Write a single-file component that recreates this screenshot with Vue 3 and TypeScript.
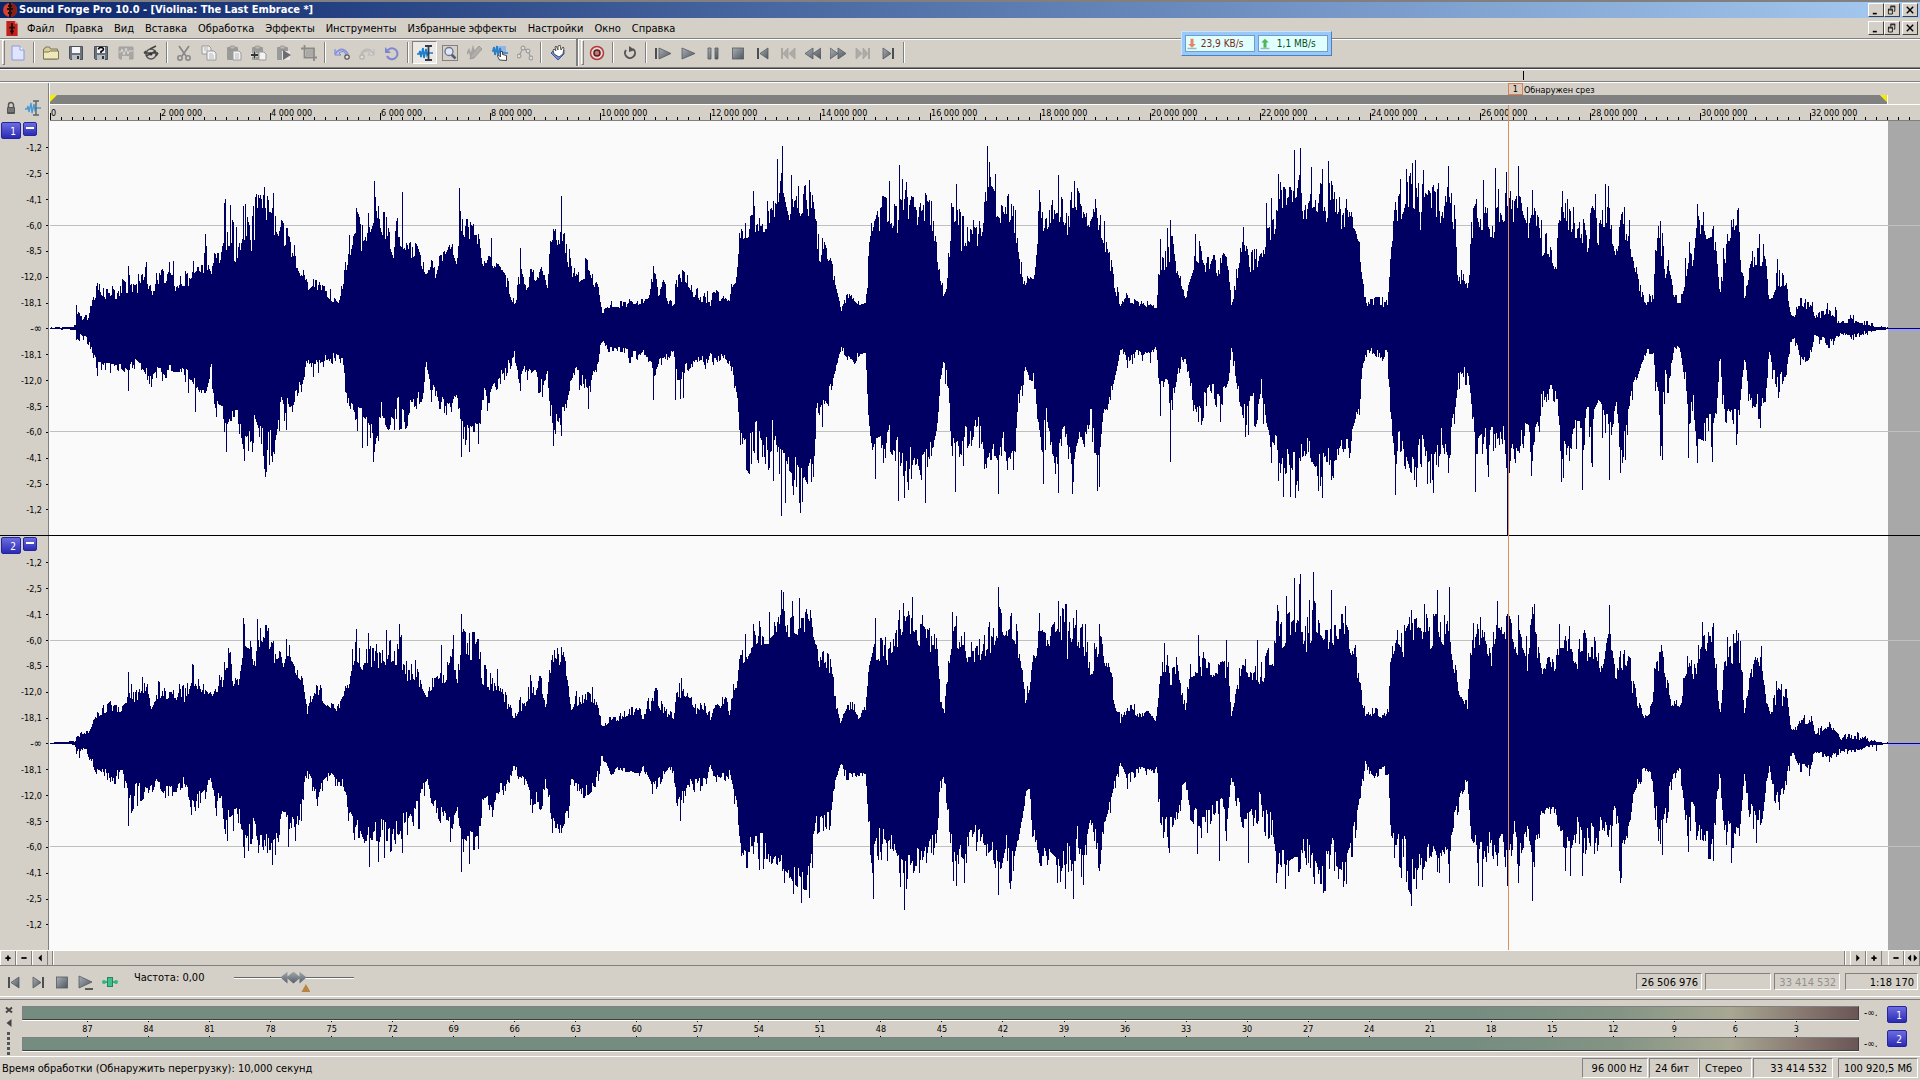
<script setup lang="ts">
import { ref } from 'vue'

interface ToolItem { kind: 'button' | 'sep' | 'edge'; label?: string; icon?: string; active?: boolean; off?: boolean }

const menu = ['Файл', 'Правка', 'Вид', 'Вставка', 'Обработка', 'Эффекты', 'Инструменты', 'Избранные эффекты', 'Настройки', 'Окно', 'Справка']

/* Glyphs live on a 16 x 16 grid; #steel is the shared grey gradient. */
const floppy = '<path d="M1.500 1.500h13v13h-12l-1-1z" fill="#6c737d" stroke="#4a5058"/><rect x="4" y="2" width="8" height="6" fill="#f4f6f8"/><rect x="4" y="10" width="8" height="5" fill="#b9bec5"/><rect x="9" y="11" width="2" height="3" fill="#30353c"/>'
const clip = '<rect x="1" y="2" width="11" height="13" rx="1" fill="#9a9a98"/><rect x="4" y="1" width="5" height="3" rx="1" fill="#b9b9b9" stroke="#868686" stroke-width=".6"/>'
const wave = '<path d="M0 9h2l1-3 1 6 2-9 1 10 2-9 1 6 1-2h5" fill="none" stroke="#1a7fd0" stroke-width="1.700"/>'
const icons: Record<string, string> = {
  create: '<path d="M2 1h8l4 4v10H2z" fill="#dfe4ff" stroke="#8e98d8"/><path d="M10 1v4h4" fill="#fff" stroke="#8e98d8"/>',
  open: '<path d="M0.500 14V4h1l1-2h4l1 2h7v10z" fill="#d8d09a" stroke="#7d7650"/><path d="M0.500 14V7h5l2-1h8v8z" fill="#eee8bc" stroke="#7d7650"/>',
  save: floppy,
  saveAs: floppy + '<path d="M5.500 4.500q0-2 2.500-2t2.500 1.700q0 1.300-2.500 2.300v1.500" fill="none" stroke="#000" stroke-width="1.600"/>',
  render: '<g opacity=".45"><path d="M1 2h14v12H2l-1-1z" fill="#777" stroke="#666"/><path d="M1 7h2l1-3 2 6 2-7 2 6 1-3h4" fill="none" stroke="#ddd"/><rect x="4" y="11" width="7" height="4" fill="#ccc"/></g>',
  publish: '<circle cx="8" cy="9" r="5" fill="none" stroke="#555" stroke-width="1.500"/><path d="M1 8h14M3 11l10-5" fill="none" stroke="#444" stroke-width="1.500"/><circle cx="8" cy="9" r="1.500" fill="#333"/><path d="M7 4l6-3M1 8l2-2M15 8l-2 3" stroke="#444" stroke-width="1.500"/>',
  cut: '<path d="M3 1l7 10M13 1L6 11" stroke="#858585" stroke-width="1.600"/><circle cx="4" cy="13" r="2.200" fill="none" stroke="#858585" stroke-width="1.500"/><circle cx="12" cy="13" r="2.200" fill="none" stroke="#858585" stroke-width="1.500"/>',
  copy: '<path d="M1 1h7l2 2v6H1z" fill="#eee" stroke="#999"/><path d="M6 6h7l2 2v7H6z" fill="#f4f4f4" stroke="#999"/><path d="M8 9h4M8 11h5M8 13h5M3 3h4M3 5h4" stroke="#aaa" stroke-width=".8"/>',
  paste: clip + '<path d="M7 6h6l2 2v7H7z" fill="#f2f2f2" stroke="#999"/><path d="M9 9h4M9 11h4M9 13h4" stroke="#aaa" stroke-width=".8"/>',
  pasteNew: clip + '<path d="M8 7h5l2 2v6H8z" fill="#f2f2f2" stroke="#999"/><path d="M0 10h7M3.500 6.500v7" stroke="#fff" stroke-width="3"/><path d="M0 10h7M3.500 6.500v7" stroke="#333" stroke-width="1.800"/>',
  pastePlay: clip + '<path d="M6 6h8v9H6z" fill="#e6e6e6"/><path d="M7 5l8 5-8 5z" fill="#6d6d6d"/>',
  trim: '<path d="M3.500 0v12.500H16M0 3.500h13V16" fill="none" stroke="#8d8a86" stroke-width="1.800"/><rect x="5" y="5" width="7" height="6" fill="#aaa"/>',
  undo: '<path d="M1 4v6h6l-2-2q5-4 7 2" fill="#c5c9ef" stroke="#7b83cf"/><path d="M1 9q7-9 13 0" fill="none" stroke="#8a91d8" stroke-width="1.800"/><circle cx="13" cy="12" r="2.200" fill="#e7e7e7" stroke="#555" stroke-width="1.200"/>',
  redo: '<g opacity=".6"><path d="M15 4v6H9l2-2q-5-4-7 2" fill="#ddd" stroke="#aaa"/><path d="M15 9Q8 0 2 9" fill="none" stroke="#aaa" stroke-width="1.800"/><circle cx="3" cy="12" r="2.200" fill="#e7e7e7" stroke="#999" stroke-width="1.200"/></g>',
  repeat: '<path d="M4 5a5.500 5.500 0 1 1-1 6" fill="none" stroke="#7e86d2" stroke-width="2" /><path d="M1 2v6h6z" fill="#7e86d2"/>',
  edit: wave + '<path d="M8 1h7M8 15h7M11.500 1v14" stroke="#333b46" stroke-width="1.800"/>',
  magnify: '<rect x=".5" y=".5" width="15" height="15" fill="none" stroke="#333" stroke-dasharray="1 1"/><path d="M9 9l4.500 4.500" stroke="#545b75" stroke-width="2.500"/><circle cx="7" cy="6.500" r="4" fill="#dfe8f8" stroke="#6c7390" stroke-width="1.300"/>',
  pencil: '<g opacity=".6"><path d="M0 9l2-4 2 6 2-8 2 7" fill="none" stroke="#888" stroke-width="1.800"/><path d="M3 14l1-4 8-9 3 3-8 9z" fill="#999" stroke="#777"/></g>',
  event: '<rect x="5" y="1" width="9" height="7" fill="#8fb7ea"/><path d="M0 6h1l1-4 1 8 2-9 1 10 2-8 1 5h7" fill="none" stroke="#2b7fc6" stroke-width="1.700"/><path d="M7.500 15l-2-4 1-1 2 2V6.500h2v3l4 1v5z" fill="#fff" stroke="#333" stroke-width=".9"/>',
  envelope: '<g fill="#ddd" stroke="#909090"><path d="M2 11l4-8 5 3 3 7" fill="none"/><circle cx="2" cy="11" r="2"/><circle cx="6" cy="3" r="2"/><circle cx="11" cy="6" r="2"/><circle cx="14" cy="13" r="2"/></g>',
  script: '<path d="M1 8l7 7 6-6V5L8 11 3 6z" fill="#6f8ddc" stroke="#4058a8"/><path d="M4 9L3 5l1-1 2 2-1-4 1-1 2 4V1l2-1 1 5 2-3 1 1-1 6-4 3z" fill="#fff" stroke="#444" stroke-width=".9"/>',
  record: '<circle cx="8" cy="8" r="6.500" fill="#ead7d3" stroke="#b5383b" stroke-width="1.500"/><circle cx="8" cy="8" r="3" fill="#b77b7b" stroke="#5c1c1e" stroke-width="1.500"/>',
  loop: '<path d="M4 5a5 5 0 1 0 7-1" fill="none" stroke="#555" stroke-width="2"/><path d="M7 1v6l6-2z" fill="#555"/>',
  playAll: '<path d="M1 3v11" stroke="#4b4f55" stroke-width="2"/><path d="M4 3l12 5.500L4 14z" fill="url(#steel)" stroke="#555a60" stroke-width=".8"/>',
  play: '<path d="M2 3l13 5.500L2 14z" fill="url(#steel)" stroke="#555a60" stroke-width=".8"/>',
  pause: '<path d="M3 3h3v11H3zM10 3h3v11h-3z" fill="url(#steel)" stroke="#555a60" stroke-width=".8"/>',
  stop: '<rect x="2.500" y="3" width="11" height="11" fill="url(#steel)" stroke="#555a60" stroke-width=".8"/>',
  toStart: '<path d="M3 3v11" stroke="#4b4f55" stroke-width="2"/><path d="M13 3v11L5 8.500z" fill="url(#steel)" stroke="#555a60" stroke-width=".8"/>',
  toEnd: '<path d="M13 3v11" stroke="#4b4f55" stroke-width="2"/><path d="M3 3v11l8-5.500z" fill="url(#steel)" stroke="#555a60" stroke-width=".8"/>',
  prev: '<g opacity=".5"><path d="M2 3v11" stroke="#666" stroke-width="1.500"/><path d="M8 3v11L3 8.500zM15 3v11L9 8.500z" fill="#888" stroke="#777" stroke-width=".8"/></g>',
  next: '<g opacity=".5"><path d="M14 3v11" stroke="#666" stroke-width="1.500"/><path d="M8 3v11l5-5.500zM1 3v11l6-5.500z" fill="#888" stroke="#777" stroke-width=".8"/></g>',
  rewind: '<path d="M8 3v11L0 8.500zM16 3v11L8 8.500z" fill="url(#steel)" stroke="#555a60" stroke-width=".8"/>',
  forward: '<path d="M0 3v11l8-5.500zM8 3v11l8-5.500z" fill="url(#steel)" stroke="#555a60" stroke-width=".8"/>',
  playLine: '<path d="M1 2l13 6L1 14z" fill="url(#steel)" stroke="#555a60" stroke-width=".8"/><path d="M7 15h8" stroke="#333" stroke-width="1.500"/>',
  scrub: '<path d="M1 8h14" stroke="#2c9d70" stroke-width="1.500"/><circle cx="2" cy="8" r="2" fill="#35b384"/><circle cx="14" cy="8" r="2" fill="#35b384"/><rect x="5.500" y="3.500" width="5" height="9" fill="#3fbf8d" stroke="#23865e"/>',
  lock: '<rect x="4" y="7" width="8" height="7" rx="1" fill="#555"/><path d="M5.500 7V5a2.500 2.500 0 0 1 5 0v2" fill="none" stroke="#555" stroke-width="1.500"/><path d="M5 9h6M5 11h6" stroke="#999"/>',
  range: '<path d="M0 9h2l1-3 1 6 2-9 1 10 2-9 1 6 1-2h5" fill="none" stroke="#4a9bd4" stroke-width="1.400"/><path d="M8 1h6M8 15h6M11 1v14" stroke="#5a616a" stroke-width="1.400"/>',
  plus: '<path d="M8 5v6M5 8h6" stroke="#000" stroke-width="2"/>',
  minus: '<path d="M5 8h6" stroke="#000" stroke-width="2"/>',
  left: '<path d="M10 4v8L6 8z"/>',
  right: '<path d="M6 4v8l4-4z"/>',
  both: '<path d="M7 4v8L3 8zM10 4v8l4-4z"/>',
  min: '<path d="M4 12h5" stroke="#000" stroke-width="2"/>',
  restore: '<path d="M6 3.500h6M6 2.500h6M11.500 3v6H10M6.500 3v3M3 6.500h6M3 7.500h6M8.500 7v5.500h-5V7" fill="none" stroke="#000"/>',
  close: '<path d="M4 3.500l8 8M12 3.500l-8 8" stroke="#000" stroke-width="1.800"/>',
  down: '<path d="M6 1h4v7h3l-5 5-5-5h3z" fill="#e8825f"/><path d="M2 14h12" stroke="#9fb7c0" stroke-width="2"/>',
  up: '<path d="M6 13h4V6h3L8 1 3 6h3z" fill="#4fb75a"/><path d="M2 14h12" stroke="#9fb7c0" stroke-width="2"/>'
}

const b = (icon: string, label: string, active = false): ToolItem => ({ kind: 'button', icon, label, active })
const sep: ToolItem = { kind: 'sep' }
const tools: ToolItem[] = [
  b('create', 'Создать'), sep, b('open', 'Открыть'), b('save', 'Сохранить'), b('saveAs', 'Сохранить как'), b('render', 'Рендер'), b('publish', 'Опубликовать'), sep,
  b('cut', 'Вырезать'), b('copy', 'Копировать'), b('paste', 'Вставить'), b('pasteNew', 'Вставить в новый'), b('pastePlay', 'Прослушать буфер'), b('trim', 'Обрезать'), sep,
  b('undo', 'Отменить'), b('redo', 'Вернуть'), b('repeat', 'Повторить'), sep,
  b('edit', 'Правка', true), b('magnify', 'Лупа'), b('pencil', 'Карандаш'), b('event', 'Событие'), b('envelope', 'Огибающая'), sep, b('script', 'Скрипт'),
  { kind: 'edge' }, b('record', 'Запись'), sep, b('loop', 'Цикл'), sep,
  b('playAll', 'Воспроизвести всё'), b('play', 'Воспроизвести'), b('pause', 'Пауза'), b('stop', 'Стоп'), b('toStart', 'В начало'), b('prev', 'Назад'),
  b('rewind', 'Перемотка назад'), b('forward', 'Перемотка вперёд'), b('next', 'Вперёд'), b('toEnd', 'В конец'), sep
]
const windowKeys = [['min', 'Свернуть'], ['restore', 'Восстановить'], ['close', 'Закрыть']]
const transport = [['toStart', 'В начало'], ['toEnd', 'В конец'], ['stop', 'Стоп'], ['playLine', 'Воспроизвести'], ['scrub', 'Прокрутка']]

const viewSamples = 34_000_000
const totalSamples = 33_414_532
const cursorSample = 26_506_976
const group = (n: number) => String(n).replace(/\B(?=(\d{3})+$)/g, ' ')
const percent = (n: number, of: number) => (n / of) * 100 + '%'
const rulerMarks = Array.from({ length: 17 }, (_, i) => group(i * 2_000_000))
const levels = ['-1,2', '-2,5', '-4,1', '-6,0', '-8,5', '-12,0', '-18,1']
const axis = [...levels, '-∞', ...[...levels].reverse()]
const meterMarks = Array.from({ length: 29 }, (_, i) => 87 - i * 3)
const rate = ref(49)

/*
 * Peak data. Each channel is split into three blocks of 640 columns.
 * A body entry is: position, upper min, upper max, lower min, lower max;
 * a spike entry is: position, level (negative below the axis).
 * Positions use a 1568-step grid per block and levels are thirds of a pixel.
 */
interface Block { body: string; spikes: string }
const channels: Block[][] = [
  [
    {
      body: '120 0 2 0 1;160 2 4 0 2;184 4 8 2 4;187 20 67 20 56;196 20 40 10 30;214 22 40 20 40;222 55 75 45 60;230 85 110 80 110;240 85 130 100 130;270 92 122 105 135;300 90 130 100 125;312 90 115 110 140;317 110 170 110 150;330 100 145 85 115;350 120 170 100 125;357 150 185 110 150;366 100 130 130 160;373 76 100 130 160;380 130 155 115 150;400 130 165 115 165;417 160 190 110 150;424 105 175 110 170;440 130 160 115 145;460 125 175 125 170;472 150 215 140 190;480 160 225 170 240;490 150 230 160 205;503 155 230 160 205;517 130 160 100 130;524 190 265 170 230;535 195 215 190 270;550 215 330 200 280;565 210 340 240 290;580 205 300 240 290;590 230 310 200 300;603 280 370 270 380;615 230 290 250 360;620 240 340 220 310;633 340 400 280 330;647 350 400 310 400;655 300 380 310 400;667 270 375 300 380;675 270 340 300 350;688 240 310 200 260;700 240 290 190 290;712 210 280 200 270;722 190 240 170 225;735 150 190 160 200;745 145 160 120 190;752 90 130 80 100;765 110 145 100 130;780 110 140 90 120;800 95 120 80 110;818 75 95 70 105;827 68 80 75 85;838 110 130 90 130;845 160 200 150 190;852 190 240 170 250;865 240 310 220 290;875 240 350 240 310;890 215 300 250 340;900 250 320 270 330;915 300 370 300 350;922 320 390 310 350;935 240 320 210 330;950 250 330 280 340;963 200 280 230 300;975 230 320 210 290;990 240 310 240 290;1005 200 275 210 260;1020 210 260 200 250;1033 180 210 170 220;1042 130 150 90 110;1055 150 200 150 200;1065 140 180 160 200;1075 190 220 200 250;1090 210 240 210 260;1105 240 310 220 260;1118 190 210 170 190;1127 300 350 260 330;1140 270 330 240 320;1150 240 330 240 300;1165 260 310 250 310;1173 250 320 230 310;1180 180 220 180 210;1200 180 215 175 210;1220 150 200 135 180;1240 125 160 100 140;1258 65 90 60 85;1264 75 100 80 110;1275 150 220 140 200;1285 110 140 110 150;1300 140 200 130 190;1310 120 150 120 160;1325 170 210 150 210;1340 100 130 110 130;1347 210 260 200 240;1360 240 300 230 290;1375 260 310 240 300;1388 200 270 210 240;1400 120 160 105 140;1415 140 180 120 170;1435 155 210 140 190;1445 140 200 160 200;1455 120 145 110 140;1465 100 120 90 120;1470 50 70 45 60;1476 42 50 32 45;1490 60 75 50 70;1520 60 80 55 70;1540 65 85 60 90;1556 55 75 65 90;1568 80 100 80 100',
      spikes: '564 370;503 283;633 400;645 400;917 442;986 409;1126 421;1375 397;1204 271;1275 241;1435 211;315 187;357 184;239 136;415 199;873 361;315 -187;478 -250;555 -368;599 -395;652 -428;648 -421;667 -398;915 -400;1131 -383;1150 -370;1356 -350;1375 -322;1442 -239;239 -140;1195 -245'
    },
    {
      body: '0 75 105 70 90;6 50 80 60 75;20 90 110 90 105;34 130 185 110 150;45 90 110 90 100;57 90 135 80 100;68 65 85 65 90;82 62 70 55 70;88 120 180 120 180;100 130 190 130 170;115 120 160 100 140;130 95 120 90 105;150 70 100 80 100;163 80 120 90 120;172 60 70 60 75;178 80 115 90 110;195 80 95 70 100;208 85 100 70 90;218 75 85 80 100;226 130 170 120 150;235 140 160 170 190;243 260 310 290 340;255 270 330 320 390;270 270 350 300 400;285 280 360 280 380;300 280 370 310 400;320 290 380 290 380;332 290 400 250 380;340 400 460 330 440;350 400 450 380 480;365 310 410 380 470;380 340 410 390 500;395 310 400 420 510;410 340 420 420 490;422 330 410 370 450;430 240 310 220 290;440 200 270 220 280;450 210 260 200 260;465 190 210 150 220;475 130 170 130 150;483 95 120 90 110;492 50 70 42 60;500 55 80 60 80;515 85 105 70 95;525 80 100 75 105;535 65 75 65 80;552 70 85 70 75;558 150 210 200 280;565 250 320 300 350;573 300 380 330 400;590 290 370 320 400;605 280 360 270 360;620 310 360 310 400;630 270 330 330 410;636 370 430 380 480;650 340 420 370 480;670 320 390 350 420;680 310 350 350 410;690 330 400 360 470;705 310 370 340 410;718 290 350 310 370;727 200 290 270 310;735 120 150 120 150;743 90 110 80 110;752 110 180 110 180;760 260 350 270 350;773 280 360 350 450;783 200 300 280 380;797 250 310 300 390;810 240 300 300 360;825 250 310 240 300;838 260 340 310 390;845 360 440 370 450;855 370 440 350 430;870 340 420 350 430;880 330 380 370 450;893 260 360 280 350;902 320 390 380 450;918 270 370 330 410;925 220 260 200 270;935 130 180 160 200;943 125 150 110 130;955 150 180 150 180;965 140 200 130 200;973 250 380 280 340;985 280 350 300 370;995 280 350 220 310;1010 320 390 340 400;1025 330 400 340 410;1040 280 350 270 340;1050 280 340 310 400;1060 340 430 380 480;1068 350 420 330 390;1080 310 380 290 330;1092 290 340 320 390;1103 230 330 200 240;1115 320 360 360 450;1125 290 340 380 460;1135 250 300 230 280;1148 180 260 200 240;1160 120 160 120 160;1172 65 90 60 100;1177 55 70 45 60;1185 75 95 70 90;1195 80 105 70 100;1215 65 85 60 85;1235 60 80 60 85;1250 70 90 70 100;1265 50 60 50 65;1270 130 190 140 190;1280 160 220 160 230;1290 140 210 150 220;1300 220 310 200 270;1312 150 200 140 170;1325 95 140 80 110;1337 80 90 85 100;1345 140 180 140 180;1360 190 260 190 250;1375 170 250 220 300;1385 160 200 170 230;1395 150 190 160 190;1405 190 230 170 200;1415 150 210 160 220;1425 190 230 180 240;1440 160 210 160 200;1448 70 90 60 90;1458 110 150 110 160;1466 180 220 180 230;1480 230 290 220 300;1495 150 230 190 290;1510 190 270 200 260;1520 140 190 140 200;1535 260 320 280 340;1550 260 330 290 370;1568 350 430 320 420',
      spikes: '337 508;349 547;370 460;277 412;415 445;611 440;636 490;653 437;763 375;775 433;852 547;857 499;871 463;1025 460;1064 442;1116 388;1292 300;1299 325;1362 283;34 187;1535 376;1547 391;1564 463;1275 268;34 -214;88 -214;99 -210;106 -207;347 -562;393 -553;327 -457;577 -449;634 -517;648 -508;699 -523;773 -490;879 -496;988 -466;1025 -493;1059 -496;1121 -487;1195 -118;1275 -260;1299 -400;1423 -280;1483 -325;1547 -403;1564 -457'
    },
    {
      body: '0 340 430 380 440;15 330 430 360 420;30 370 430 370 450;48 400 480 370 450;58 310 360 310 380;65 310 380 290 360;75 340 420 350 440;90 350 430 390 460;100 300 390 370 470;112 320 370 360 410;125 380 450 340 420;140 320 400 350 400;152 270 350 320 380;168 310 390 310 400;180 270 310 270 330;193 240 270 210 270;200 140 180 120 150;208 60 85 60 90;220 70 90 60 80;240 65 90 60 90;262 65 85 60 80;270 200 230 230 260;280 340 370 330 420;300 290 400 290 390;315 370 460 350 440;330 340 480 400 460;342 290 380 300 390;355 370 450 360 440;375 350 420 350 430;395 310 400 300 380;413 360 450 350 430;425 260 350 240 290;435 130 190 130 180;445 130 180 120 160;460 100 120 110 150;468 240 340 220 310;480 280 370 300 390;495 290 380 290 370;507 280 370 310 380;518 220 330 280 360;530 330 420 310 370;548 300 360 290 350;556 370 440 340 440;570 310 390 290 360;582 350 450 330 420;595 310 370 280 340;608 250 340 290 350;618 320 400 310 400;632 280 340 270 350;640 190 280 180 230;655 220 290 170 210;675 160 200 170 200;682 240 340 250 310;692 330 400 340 430;710 290 370 300 370;725 250 340 270 330;740 260 370 260 370;750 220 330 230 310;765 290 370 260 370;780 240 330 220 320;797 310 400 250 330;815 240 350 250 290;823 200 240 200 240;835 270 350 330 420;845 270 340 300 370;858 210 280 200 260;868 150 190 140 170;880 110 140 100 130;893 65 85 60 80;910 75 95 60 80;914 75 95 60 80;920 180 280 150 240;935 220 310 230 320;943 130 180 120 170;950 160 220 150 200;965 75 95 50 65;980 75 95 55 70;990 120 160 110 160;1002 220 320 240 330;1010 130 190 150 210;1022 260 340 260 360;1040 270 340 260 350;1058 280 350 260 360;1068 200 270 210 280;1077 75 90 70 85;1085 150 240 180 260;1095 240 280 230 280;1110 240 310 240 310;1122 260 330 240 300;1130 160 210 150 180;1138 70 90 65 80;1145 130 180 150 200;1160 190 260 200 260;1178 190 260 200 250;1187 200 250 180 240;1197 70 85 55 70;1206 90 120 110 140;1220 130 190 150 200;1240 110 140 100 140;1250 40 60 35 50;1258 30 45 25 35;1270 60 90 60 90;1285 60 90 80 110;1300 60 90 60 80;1308 25 40 15 30;1325 30 55 25 45;1345 40 60 30 50;1358 25 55 30 45;1370 10 20 10 20;1385 15 30 10 20;1405 15 35 15 30;1425 10 22 8 20;1445 5 15 5 12;1460 2 5 2 5;1488 1 2 1 2',
      spikes: '35 535;49 541;76 484;104 477;119 502;295 448;324 496;332 505;351 475;414 487;498 445;528 481;555 467;585 487;619 415;692 412;773 403;797 433;844 364;933 322;1023 373;1120 355;1174 283;1219 208;1341 76;8 -503;25 -503;38 -506;94 -487;104 -506;283 -497;334 -475;376 -491;413 -433;479 -488;511 -445;616 -440;690 -460;741 -482;807 -452;834 -433;933 -380;937 -392;1001 -388;1023 -403;1059 -398;1118 -347;1177 -298;1222 -208;557 -617'
    }
  ],
  [
    {
      body: '120 0 1 0 1;160 2 4 0 1;183 4 8 1 3;187 20 57 20 58;196 20 38 10 28;214 22 35 20 40;222 45 60 40 60;235 75 95 65 90;260 88 110 80 110;280 88 125 80 110;300 90 115 80 105;313 105 130 110 150;320 140 185 140 190;330 120 160 120 170;345 150 180 120 160;357 150 195 110 150;373 88 110 125 160;382 130 165 100 130;395 130 175 125 165;410 130 160 120 150;430 130 150 120 150;450 120 180 100 140;463 140 180 150 200;475 170 235 165 215;490 140 170 140 180;500 130 175 130 175;517 120 140 95 115;527 150 190 140 190;540 150 190 150 190;552 200 250 200 260;563 200 270 190 250;570 160 180 180 240;583 170 220 170 240;598 280 350 260 330;612 260 330 240 320;622 190 250 210 260;635 290 350 270 320;655 270 340 270 330;665 240 290 270 330;680 240 320 240 310;693 200 230 190 220;708 240 300 220 270;725 200 230 220 270;740 180 195 160 200;746 120 140 100 130;752 80 100 70 90;765 120 150 100 140;775 150 185 150 180;790 120 155 100 130;805 105 125 80 110;825 95 110 105 120;838 110 140 100 130;853 160 220 170 220;867 240 310 200 260;880 230 270 210 260;895 220 300 240 310;915 230 300 240 310;935 230 280 230 310;955 240 310 250 320;975 240 300 230 290;990 200 280 210 280;1005 180 270 180 240;1025 170 240 170 230;1035 140 170 120 160;1045 130 140 100 120;1055 150 190 150 180;1075 170 230 170 220;1090 190 250 190 230;1110 220 300 200 270;1120 180 220 180 230;1133 290 340 260 310;1150 240 310 260 310;1172 260 320 250 300;1180 180 220 160 220;1195 150 210 150 190;1210 160 210 150 200;1225 150 190 120 160;1240 110 140 110 130;1258 65 80 60 75;1275 100 140 90 120;1287 95 120 100 130;1300 140 190 150 190;1325 140 180 140 180;1338 90 120 100 130;1348 220 270 180 220;1360 250 275 220 260;1375 230 280 220 270;1390 170 200 180 230;1398 100 120 100 125;1415 110 150 110 150;1440 110 150 110 150;1452 100 140 100 140;1465 90 120 80 120;1473 45 55 30 45;1490 60 80 60 80;1520 70 85 70 90;1540 80 100 75 90;1568 90 115 85 100',
      spikes: '315 213;473 235;562 270;596 376;599 358;631 373;655 337;702 313;873 343;947 340;979 358;1081 295;1131 388;1376 289;1452 169;1299 205;315 -247;469 -214;530 -217;557 -290;599 -343;667 -364;707 -310;905 -370;927 -355;986 -328;1131 -385;1150 -361;1353 -268;1376 -268;1028 -256;1104 -295'
    },
    {
      body: '0 80 115 70 90;6 60 75 60 75;18 85 115 85 110;35 120 165 120 170;50 100 130 90 120;70 75 100 65 80;82 68 85 70 90;88 130 165 150 190;102 140 180 130 200;115 130 160 110 140;135 90 115 100 130;160 95 125 95 130;172 60 75 60 70;180 100 110 90 110;200 110 130 85 105;210 120 145 90 130;218 80 100 75 90;228 150 180 130 180;236 150 180 160 190;243 240 280 270 320;260 250 300 290 350;280 270 340 280 350;300 290 350 270 350;320 290 360 280 350;335 310 380 280 340;346 370 450 340 390;360 310 380 350 410;373 320 400 370 430;390 310 390 380 450;405 340 400 390 460;417 310 370 350 420;428 240 320 220 280;435 210 280 210 270;450 240 290 200 260;465 210 270 200 250;475 120 170 110 140;490 60 75 55 75;503 90 115 80 110;520 95 125 90 110;535 70 90 85 105;552 85 105 80 95;560 200 260 230 310;572 250 330 300 400;585 250 310 250 310;600 230 310 260 330;620 260 320 280 340;640 300 380 340 410;660 320 390 340 420;675 310 380 310 370;690 290 370 330 400;710 270 350 290 350;725 250 310 260 320;735 120 170 110 160;745 90 100 90 110;752 180 220 160 210;763 290 350 290 370;773 300 360 340 410;785 210 300 290 340;800 240 300 290 360;818 240 300 230 300;832 240 300 260 320;850 280 370 300 370;865 270 360 280 350;878 340 400 350 420;895 310 340 260 320;905 320 370 340 410;920 300 370 300 370;935 190 230 200 250;943 120 140 140 180;953 150 180 130 160;963 240 280 250 300;980 290 360 300 350;1000 290 340 310 360;1025 330 400 350 410;1047 260 370 250 340;1060 310 380 350 430;1072 270 350 230 320;1085 280 360 330 410;1103 200 290 210 250;1123 270 350 290 360;1135 250 290 230 290;1148 200 230 180 210;1160 120 160 120 150;1178 55 75 45 70;1190 85 110 80 110;1207 85 110 75 105;1225 75 85 70 90;1245 80 95 75 90;1265 65 80 60 75;1273 200 260 190 240;1285 200 270 210 270;1300 180 250 220 300;1315 200 260 190 250;1327 130 170 120 150;1337 95 105 110 130;1345 190 240 170 230;1365 200 260 200 260;1380 190 260 190 250;1395 190 240 190 240;1410 180 230 170 210;1425 200 250 170 260;1438 200 270 200 260;1448 75 90 80 100;1460 130 170 130 170;1475 190 250 200 270;1490 190 240 200 270;1505 190 220 190 260;1520 160 220 130 200;1535 220 290 210 290;1550 220 290 200 270;1560 300 370 290 360;1568 300 370 300 370',
      spikes: '101 196;258 328;277 358;317 394;346 460;351 454;373 427;391 436;408 403;577 376;645 421;668 439;658 397;692 385;766 394;775 382;879 469;911 391;980 391;1025 427;1069 400;1126 358;1285 301;1368 325;1437 310;1513 310;1562 415;99 -230;294 -377;354 -416;396 -478;572 -464;648 -499;795 -416;768 -412;879 -452;905 -416;1042 -434;1062 -464;1086 -422;1123 -371;1195 -136;1297 -328;1366 -331;1420 -352;1491 -358;1559 -416'
    },
    {
      body: '0 270 330 320 370;15 300 360 320 400;32 320 380 320 390;48 380 450 320 390;58 240 300 240 290;70 280 380 300 380;85 320 400 340 410;105 290 370 330 410;122 260 370 280 370;140 310 370 310 380;160 310 370 310 390;175 260 310 270 350;188 200 270 200 250;200 120 160 110 150;208 65 80 50 65;222 80 105 80 110;245 75 90 70 95;265 80 95 65 85;270 240 280 230 260;285 290 340 270 350;303 260 330 260 370;320 310 380 330 420;335 310 370 340 420;355 320 400 320 370;368 270 340 260 340;385 320 380 320 370;400 290 350 280 340;414 330 400 330 420;425 200 250 210 240;440 140 180 140 170;458 100 125 100 120;466 250 310 260 310;485 290 370 290 370;500 260 350 300 370;516 220 300 240 320;530 310 390 310 370;545 280 340 260 330;557 310 370 340 410;573 230 300 210 300;585 280 370 310 380;605 220 290 240 300;620 320 400 320 400;632 240 310 240 300;642 195 230 190 210;657 215 245 190 230;673 210 240 190 210;685 270 330 260 340;710 270 330 270 350;727 220 280 220 270;745 280 345 290 370;760 200 270 220 280;770 250 340 260 340;785 180 230 200 250;805 280 350 260 340;822 160 210 170 210;833 230 290 290 380;855 210 270 210 260;865 130 180 130 150;880 90 120 90 115;897 55 75 60 80;910 90 110 75 100;920 180 260 170 240;935 220 290 240 310;950 150 210 140 210;960 105 130 90 110;980 100 120 65 85;990 180 260 200 240;1002 220 300 220 310;1010 140 180 150 180;1022 230 290 230 290;1040 280 340 260 320;1060 270 330 260 320;1070 160 200 140 170;1077 75 90 80 100;1087 210 270 230 310;1105 230 310 210 290;1127 230 310 220 290;1138 75 100 75 90;1147 150 180 170 220;1165 190 260 200 270;1180 230 290 190 240;1190 110 150 100 130;1197 70 85 55 70;1208 100 150 110 150;1220 130 190 130 180;1240 100 160 100 140;1250 35 50 30 45;1258 25 40 25 35;1272 60 85 55 75;1297 60 90 60 85;1310 15 30 15 25;1335 35 60 30 50;1355 30 50 30 50;1375 10 25 10 20;1400 15 35 15 30;1425 10 20 10 18;1445 4 12 4 10;1462 2 4 2 5;1488 0 3 0 1',
      spikes: '16 442;36 496;49 508;82 514;126 460;160 412;321 400;353 418;386 460;415 469;533 427;585 385;623 418;685 358;807 415;934 295;1034 364;1062 361;1123 331;1179 292;1217 187;1241 162;13 -436;84 -421;112 -442;155 -430;322 -487;334 -436;415 -418;486 -427;496 -430;557 -427;585 -418;619 -472;699 -382;711 -397;741 -397;834 -418;937 -334;1001 -325;1062 -350;1106 -358;1168 -298;1224 -198;1462 -22'
    }
  ]
]

const parse = (text: string) => text.split(';').map(row => row.split(' ').map(Number))

function waveform(blocks: Block[], seed: number): string {
  let state = seed
  const random = () => {
    state = (state * 1664525 + 1013904223) % 4294967296
    return state / 4294967296
  }
  /* Mostly inside the min-max band, with an occasional peak past it. */
  const noise = () => (random() < 0.14 ? 1 + random() * 0.5 : random() * 1.1 - 0.1)
  const upper: number[] = []
  const lower: number[] = []
  let up = 0
  let down = 0
  blocks.forEach((block, index) => {
    const points = parse(block.body)
    const first = index * 640 - 50
    for (let column = 0; column < 640; column++) {
      const x = column * 2.45
      const at = points.findIndex(p => p[0] > x)
      if (at < 1) continue
      const from = points[at - 1]
      const to = points[at]
      const t = (x - from[0]) / (to[0] - from[0])
      const mix = (k: number) => from[k] + (to[k] - from[k]) * t
      if (random() > 0.25) up = noise()
      if (random() > 0.25) down = noise()
      upper[first + column] = mix(1) + (mix(2) - mix(1)) * up
      lower[first + column] = mix(3) + (mix(4) - mix(3)) * down
    }
    for (const [x, level] of parse(block.spikes)) {
      const column = first + Math.floor(x / 2.45)
      if (level > 0) upper[column] = level
      else lower[column] = -level
    }
  })
  let path = ''
  for (let column = 0; column < 1838; column++) {
    const top = 207 - Math.round(Math.max(0, upper[column] || 0) / 3)
    const bottom = 208 + Math.round(Math.max(0, lower[column] || 0) / 3)
    path += `M${column} ${top}h1V${bottom}h-1z`
  }
  return path
}

const tracks = channels.map((blocks, i) => ({ name: String(i + 1), path: waveform(blocks, 4177 + i * 911) }))
</script>

<template>
  <div class="app">
    <svg class="defs" width="0" height="0" aria-hidden="true">
      <defs>
        <linearGradient id="steel" x1="0" y1="0" x2="1" y2="1">
          <stop offset="0" stop-color="#a9afb6" />
          <stop offset="1" stop-color="#50565d" />
        </linearGradient>
      </defs>
    </svg>

    <header class="title">
      <svg class="logo" viewBox="0 0 16 16">
        <circle cx="8" cy="8" r="7" fill="#d8402c" /><path d="M8 1a7 7 0 0 1 0 14z" fill="#8d1d14" />
        <path d="M8 1v14M5 7h6M6 4h4M6 11h4" stroke="#1a1010" stroke-width="2" />
      </svg>
      <h1>Sound Forge Pro 10.0 - [Violina: The Last Embrace *]</h1>
      <div class="keys">
        <button v-for="[icon, label] in windowKeys" :key="icon" class="key" :aria-label="label">
          <svg viewBox="0 0 16 15" v-html="icons[icon]" />
        </button>
      </div>
    </header>

    <nav class="menu">
      <svg class="logo" viewBox="0 0 16 16">
        <path d="M2 0h9l3 3v13H2z" fill="#c4211c" /><path d="M11 0v3h3" fill="#e88" />
        <path d="M8 2v12M5 7h6M6 11h4" stroke="#1a1010" stroke-width="2" />
      </svg>
      <button v-for="item in menu" :key="item" class="menu-item">{{ item }}</button>
      <div class="keys">
        <button v-for="[icon, label] in windowKeys" :key="icon" class="key" :aria-label="label">
          <svg viewBox="0 0 16 15" v-html="icons[icon]" />
        </button>
      </div>
    </nav>

    <aside class="net">
      <span class="net-cell down"><svg viewBox="0 0 16 16" v-html="icons.down" />23,9 KB/s</span>
      <span class="net-cell up"><svg viewBox="0 0 16 16" v-html="icons.up" />1,1 MB/s</span>
    </aside>

    <div class="toolbar" role="toolbar">
      <span class="grip"></span>
      <template v-for="(tool, i) in tools" :key="i">
        <button v-if="tool.kind === 'button'" class="tool" :class="{ active: tool.active }" :aria-label="tool.label">
          <svg viewBox="0 0 16 16" v-html="icons[tool.icon!]" />
        </button>
        <span v-else-if="tool.kind === 'sep'" class="sep"></span>
        <template v-else><span class="edge"></span><span class="grip"></span></template>
      </template>
    </div>

    <div class="overview"><i :style="{ left: percent(cursorSample, totalSamples) }"></i></div>

    <main class="editor">
      <div class="cursor-area"><i class="cursor" :style="{ left: percent(cursorSample, viewSamples) }"></i></div>
      <div class="head">
        <div class="corner">
          <button class="plain" aria-label="Блокировка"><svg viewBox="0 0 16 16" v-html="icons.lock" /></button>
          <button class="plain" aria-label="Правка"><svg viewBox="0 0 16 16" v-html="icons.range" /></button>
        </div>
        <div class="timeline">
          <div class="markers">
            <span class="marker" :style="{ marginLeft: percent(cursorSample, viewSamples) }"><b>1</b>Обнаружен срез</span>
          </div>
          <div class="range"><span :style="{ width: percent(totalSamples, viewSamples) }"></span></div>
          <div class="ruler"><span v-for="mark in rulerMarks" :key="mark">{{ mark }}</span></div>
        </div>
      </div>

      <section v-for="track in tracks" :key="track.name" class="track">
        <div class="scale">
          <div class="track-keys">
            <button class="number">{{ track.name }}</button>
            <button class="fold" aria-label="Свернуть"></button>
          </div>
          <div class="axis"><span v-for="(level, i) in axis" :key="i" :class="{ silence: level === '-∞' }">{{ level }}</span></div>
        </div>
        <svg class="wave" viewBox="0 0 1870 414" preserveAspectRatio="none" shape-rendering="crispEdges">
          <rect width="1838" height="414" fill="#fafafa" />
          <rect x="1838" width="32" height="414" fill="#a8a8a8" />
          <path d="M0 104h1870v1H0zM0 310h1870v1H0z" fill="#bfbfbf" />
          <path d="M1838 208h32v2h-32z" fill="#a0a0e0" />
          <path d="M0 207h1870v1H0z" fill="#000090" />
          <path :d="track.path" fill="#000062" />
        </svg>
      </section>
    </main>

    <div class="scroll">
      <button class="nub" aria-label="Увеличить"><svg viewBox="0 0 16 16" v-html="icons.plus" /></button>
      <button class="nub" aria-label="Уменьшить"><svg viewBox="0 0 16 16" v-html="icons.minus" /></button>
      <button class="nub" aria-label="Влево"><svg viewBox="0 0 16 16" v-html="icons.left" /></button>
      <span class="thumb"></span>
      <button class="nub" aria-label="Вправо"><svg viewBox="0 0 16 16" v-html="icons.right" /></button>
      <button class="nub" aria-label="Приблизить"><svg viewBox="0 0 16 16" v-html="icons.plus" /></button>
      <span class="gap"></span>
      <button class="nub" aria-label="Отдалить"><svg viewBox="0 0 16 16" v-html="icons.minus" /></button>
      <button class="nub" aria-label="Масштаб"><svg viewBox="0 0 16 16" v-html="icons.both" /></button>
    </div>

    <div class="transport">
      <button v-for="[icon, label] in transport" :key="icon" class="tool" :aria-label="label">
        <svg viewBox="0 0 16 16" v-html="icons[icon]" />
      </button>
      <label class="rate" for="rate">Частота: 0,00</label>
      <div class="slider">
        <input id="rate" v-model="rate" type="range" min="0" max="100" />
        <i></i>
      </div>
      <div class="boxes">
        <output class="box pos">26 506 976</output>
        <output class="box pos"></output>
        <output class="box pos dim">33 414 532</output>
        <output class="box zoom">1:18 170</output>
      </div>
    </div>

    <div class="meters">
      <div class="dock">
        <button class="mini" aria-label="Закрыть"><svg viewBox="0 0 16 16"><path d="M2 3l12 10M14 3L2 13" stroke="#444" stroke-width="4" /></svg></button>
        <button class="mini" aria-label="Меню"><svg viewBox="0 0 16 16"><path d="M13 0v16L3 8z" fill="#444" /></svg></button>
        <span class="dots"></span>
      </div>
      <div class="bars">
        <div class="bar"></div>
        <div class="marks"><span v-for="mark in meterMarks" :key="mark">{{ mark }}</span></div>
        <div class="bar"></div>
      </div>
      <div class="peaks"><span>-∞.</span><span>-∞.</span></div>
      <div class="meter-keys">
        <button class="number">1</button>
        <button class="number">2</button>
      </div>
    </div>

    <footer class="status">
      <span class="message">Время обработки (Обнаружить перегрузку): 10,000 секунд</span>
      <span class="box s1">96 000 Hz</span>
      <span class="box s2">24 бит</span>
      <span class="box s3">Стерео</span>
      <span class="box s4">33 414 532</span>
      <span class="box s5">100 920,5 Мб</span>
    </footer>
  </div>
</template>

<style>
body {
  margin: 0;
  background: #d4d0c8;
}
</style>

<style scoped>
.app {
  position: relative;
  box-sizing: border-box;
  display: flex;
  flex-direction: column;
  height: 100vh;
  border-top: 2px solid #808080;
  overflow: hidden;
  background: #d4d0c8;
  color: #000;
  font: 11px/14px "DejaVu Sans Condensed", "DejaVu Sans", sans-serif;
}
.app * { box-sizing: border-box; }
.defs { position: absolute; }
button {
  flex: none;
  margin: 0;
  padding: 0;
  border: 0;
  background: none;
  color: inherit;
  font: inherit;
}
svg { display: block; }

.title {
  display: flex;
  flex: none;
  align-items: center;
  height: 16px;
  padding: 0 2px;
  background: linear-gradient(90deg, #0a246a, #a6caf0);
  color: #fff;
}
.logo { flex: none; width: 16px; height: 16px; }
.title h1 {
  margin: 0 0 0 1px;
  font-size: 11px;
  line-height: 14px;
  font-weight: bold;
}
.keys { display: flex; margin-left: auto; }
.key {
  width: 16px;
  height: 14px;
  border: 1px solid;
  border-color: #fff #404040 #404040 #fff;
  background: #d4d0c8;
}
.key:last-child { margin-left: 2px; }
.key svg { width: 14px; height: 12px; }

.menu {
  display: flex;
  flex: none;
  align-items: center;
  height: 20px;
  padding: 0 2px;
}
.menu .logo { width: 16px; height: 15px; margin: 0 2px; }
.menu-item { padding: 1px 6px 0 5px; white-space: nowrap; }

.net {
  position: absolute;
  top: 29px;
  left: 61.5%;
  display: flex;
  gap: 3px;
  height: 25px;
  padding: 3px;
  border: 1px solid;
  border-color: #c9e4fb #4f7fb8 #4f7fb8 #c9e4fb;
  background: #99c8fa;
}
.net-cell {
  display: flex;
  align-items: center;
  gap: 3px;
  width: 70px;
  border: 1px solid #6f9fc8;
  background: #e0ffff;
  font-size: 10px;
  line-height: 17px;
  white-space: nowrap;
}
.net-cell svg { width: 12px; height: 12px; }
.down { color: #7a2a14; }
.up { gap: 6px; color: #06501a; }

.toolbar {
  display: flex;
  flex: none;
  align-items: center;
  height: 31px;
  padding-bottom: 2px;
  border-top: 1px solid #808080;
  border-bottom: 1px solid #404040;
  box-shadow: inset 0 1px #fff, inset 0 -1px #808080;
}
.grip {
  width: 3px;
  height: 25px;
  margin-left: 2px;
  border: 1px solid;
  border-color: #fff #808080 #808080 #fff;
}
.tool {
  display: grid;
  place-items: center;
  width: 25px;
  height: 23px;
}
.tool svg { width: 16px; height: 16px; }
.tool.active {
  border: 1px solid;
  border-color: #808080 #fff #fff #808080;
  background: #ece9e4;
}
.sep {
  width: 2px;
  height: 21px;
  margin: 0 3px;
  border-left: 1px solid #808080;
  border-right: 1px solid #fff;
}
.edge {
  width: 3px;
  height: 27px;
  margin-left: 6px;
  border-left: 2px solid #808080;
  border-right: 1px solid #fff;
}

.overview {
  position: relative;
  flex: none;
  height: 13px;
  border-top: 1px solid #fff;
  border-bottom: 1px solid #808080;
}
.overview i {
  position: absolute;
  top: 1px;
  width: 1px;
  height: 9px;
  background: #000;
}

.editor {
  position: relative;
  display: flex;
  flex: 1;
  flex-direction: column;
  min-height: 0;
}
.cursor-area {
  position: absolute;
  inset: 23px 0 0 50px;
  pointer-events: none;
}
.cursor {
  position: absolute;
  top: 0;
  bottom: 0;
  width: 1px;
  background: #d9915a;
}
.head { display: flex; flex: none; height: 39px; border-top: 1px solid #fff; }
.corner {
  display: flex;
  align-items: end;
  justify-content: space-between;
  width: 49px;
  padding: 0 7px 5px 3px;
  border-right: 1px solid #808080;
}
.plain svg { width: 16px; height: 16px; }
.timeline { flex: 1; min-width: 0; padding-left: 1px; box-shadow: inset 1px 0 #fff; }
.markers { display: flex; height: 12px; }
.marker {
  display: flex;
  flex: none;
  gap: 1px;
  font-size: 9px;
  line-height: 14px;
  white-space: nowrap;
}
.marker b {
  width: 15px;
  height: 12px;
  border: 1px solid #d9814f;
  background: #dccabd;
  font-weight: normal;
  line-height: 11px;
  text-align: center;
}
.range { height: 10px; border-bottom: 1px solid #fff; }
.range span {
  display: flex;
  justify-content: space-between;
  height: 9px;
  background: #808080;
  border-right: 1px solid #fff;
}
.range span::before,
.range span::after {
  content: "";
  width: 7px;
  height: 7px;
  background: #f4ee00;
  clip-path: polygon(0 0, 100% 0, 0 100%);
}
.range span::after { clip-path: polygon(0 0, 100% 0, 100% 100%); }
.ruler {
  display: flex;
  height: 16px;
  border-bottom: 1px solid #808080;
}
.ruler span {
  flex: 1 1 0;
  min-width: 0;
  padding-left: 1px;
  background:
    linear-gradient(#000, #000) 0 100% / 1px 7px no-repeat,
    repeating-linear-gradient(90deg, #000 0 1px, transparent 1px 10%) 0 100% / 100% 3px no-repeat;
  font-size: 9px;
  line-height: 16px;
  white-space: nowrap;
}

.track { display: flex; flex: 1 1 0; min-height: 0; }
.track + .track { border-top: 1px solid #000; }
.scale {
  position: relative;
  flex: none;
  width: 49px;
  border-right: 1px solid #808080;
}
.track-keys {
  position: absolute;
  top: 1px;
  left: 1px;
  display: flex;
  align-items: start;
  gap: 2px;
}
.number {
  width: 20px;
  height: 17px;
  padding-right: 4px;
  border: 1px solid #2424a0;
  border-radius: 2px;
  background: linear-gradient(#6c6ce0, #2b2bb4);
  color: #fff;
  font-size: 10px;
  line-height: 17px;
  text-align: right;
}
.fold {
  width: 14px;
  height: 14px;
  border: 1px solid #2424a0;
  border-radius: 2px;
  background: linear-gradient(#fff, #fff) 50% 4px / 8px 2px no-repeat, linear-gradient(#6c6ce0, #2b2bb4);
}
.axis {
  display: flex;
  flex-direction: column;
  height: 100%;
  padding: 14px 0 12px;
}
.axis span {
  display: flex;
  flex: 1 1 0;
  align-items: center;
  justify-content: flex-end;
  gap: 4px;
  min-height: 0;
  font-size: 9px;
}
.axis .silence { font-size: 11px; }
.axis span::after {
  content: "";
  width: 2px;
  height: 1px;
  background: #000;
}
.wave {
  flex: 1;
  min-width: 0;
  height: 100%;
  padding-left: 1px;
  background: #fafafa;
}

.scroll {
  display: flex;
  flex: none;
  height: 16px;
  border-top: 1px solid #fff;
  border-bottom: 1px solid #808080;
}
.nub {
  width: 16px;
  border-left: 1px solid #fff;
  border-right: 1px solid #808080;
}
.nub svg { width: 14px; height: 14px; }
.thumb {
  flex: 1;
  margin: 0 5px;
  border-left: 1px solid #fff;
  border-right: 1px solid #808080;
  box-shadow: -1px 0 #808080, 1px 0 #fff;
}
.gap { width: 6px; }

.transport {
  display: flex;
  flex: none;
  align-items: start;
  height: 34px;
  padding: 4px 2px 0;
  border-bottom: 1px solid #808080;
  box-shadow: inset 0 -2px #d4d0c8, inset 0 -3px #fff;
}
.transport .tool { width: 24px; }
.rate { margin: 1px 30px 0 12px; }
.slider { position: relative; width: 120px; margin-top: 1px; }
.slider input {
  display: block;
  width: 100%;
  height: 13px;
  margin: 0;
  appearance: none;
  background: linear-gradient(#666 50%, #fff 50%) 0 50% / 100% 2px no-repeat;
}
.slider input::-webkit-slider-thumb {
  width: 26px;
  height: 12px;
  appearance: none;
  background: linear-gradient(#a0a6ad, #555b62);
  clip-path: polygon(0 50%, 27% 0, 27% 42%, 50% 0, 73% 42%, 73% 0, 100% 50%, 73% 100%, 73% 58%, 50% 100%, 27% 58%, 27% 100%);
}
.slider i {
  position: absolute;
  top: 13px;
  left: 67px;
  width: 9px;
  height: 8px;
  background: #b98442;
  clip-path: polygon(50% 0, 100% 100%, 0 100%);
}
.boxes { display: flex; gap: 3px; margin: 3px 0 0 auto; }
.box {
  flex: none;
  height: 17px;
  padding: 0 3px;
  border: 1px solid;
  border-color: #808080 #fff #fff #808080;
  line-height: 17px;
  text-align: right;
  white-space: nowrap;
}
.pos { width: 66px; }
.zoom { width: 73px; margin-left: 2px; }
.dim { color: #909090; }

.meters { display: flex; flex: none; height: 56px; padding-top: 6px; }
.dock {
  display: flex;
  flex-direction: column;
  align-items: center;
  gap: 5px;
  width: 22px;
  padding-right: 5px;
}
.mini svg { width: 8px; height: 8px; }
.dots {
  width: 3px;
  height: 24px;
  background: repeating-linear-gradient(#555 0 3px, transparent 3px 5px);
}
.bars { flex: 1; min-width: 0; }
.bar {
  height: 14px;
  border: 1px solid;
  border-color: #808080 #404040 #404040 #808080;
  background: linear-gradient(90deg, #758d80 79%, #849484 87%, #a8a893 93%, #887870 97%, #6a5555);
  box-shadow: 0 1px #fff;
}
.marks {
  display: flex;
  height: 17px;
  padding: 0 32px 0 35px;
}
.marks span {
  flex: 1 1 0;
  background:
    linear-gradient(#000, #000) 50% 1px / 1px 1px no-repeat,
    linear-gradient(#000, #000) 50% 100% / 1px 1px no-repeat;
  font-size: 9px;
  line-height: 19px;
  text-align: center;
}
.peaks {
  display: flex;
  flex-direction: column;
  gap: 17px;
  width: 28px;
  padding-left: 5px;
  font-size: 10px;
}
.meter-keys { display: flex; flex-direction: column; gap: 7px; width: 33px; }

.status {
  display: flex;
  flex: none;
  height: 24px;
  padding: 1px 2px 2px;
  border-top: 1px solid #fff;
  line-height: 20px;
}
.message { margin-right: auto; line-height: 21px; white-space: nowrap; }
.status .box { height: 20px; padding: 0 5px; line-height: 19px; }
.s1 { width: 66px; margin-right: 1px; }
.s2 { width: 50px; }
.s3 { width: 53px; margin-right: 1px; }
.s4 { width: 80px; margin-right: 5px; }
.s5 { width: 80px; }
.status .s2, .status .s3 { text-align: left; }
</style>
